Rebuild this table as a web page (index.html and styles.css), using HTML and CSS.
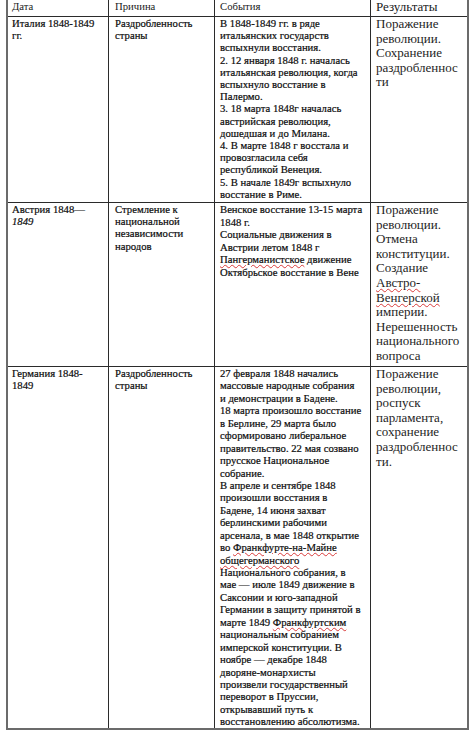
FILE: index.html
```html
<!DOCTYPE html>
<html lang="ru">
<head>
<meta charset="utf-8">
<title>Революции 1848–1849 гг.</title>
<link rel="stylesheet" href="styles.css">
</head>
<body>
<table class="grid">
  <thead>
    <tr class="head">
      <th class="cell c-date">Дата</th>
      <th class="cell c-cause">Причина</th>
      <th class="cell c-events">События</th>
      <th class="cell c-result">Результаты</th>
    </tr>
  </thead>
  <tbody>
    <tr class="row r1">
      <td class="cell c-date">Италия 1848-1849<br>гг.</td>
      <td class="cell c-cause">Раздробленность<br>страны</td>
      <td class="cell c-events">В 1848-1849 гг. в ряде<br>итальянских государств<br>вспыхнули восстания.<br>2. 12 января 1848 г. началась<br>итальянская революция, когда<br>вспыхнуло восстание в<br>Палермо.<br>3. 18 марта 1848г началась<br>австрийская революция,<br>дошедшая и до Милана.<br>4. В марте 1848 г восстала и<br>провозгласила себя<br>республикой Венеция.<br>5. В начале 1849г вспыхнуло<br>восстание в Риме.</td>
      <td class="cell c-result">Поражение<br>революции.<br>Сохранение<br>раздробленнос<br>ти</td>
    </tr>
    <tr class="row r2">
      <td class="cell c-date">Австрия 1848—<br><em>1849</em></td>
      <td class="cell c-cause">Стремление к<br>национальной<br>независимости<br>народов</td>
      <td class="cell c-events loose">Венское восстание 13-15 марта<br>1848 г.<br>Социальные движения в<br>Австрии летом 1848 г<br><span class="typo">Пангерманистское</span> движение<br>Октябрьское восстание в Вене</td>
      <td class="cell c-result">Поражение<br>революции.<br>Отмена<br>конституции.<br>Создание<br><span class="typo">Австро-</span><br><span class="typo">Венгерской</span><br>империи.<br>Нерешенность<br>национального<br>вопроса</td>
    </tr>
    <tr class="row r3">
      <td class="cell c-date">Германия 1848-<br>1849</td>
      <td class="cell c-cause">Раздробленность<br>страны</td>
      <td class="cell c-events long">27 февраля 1848 начались<br>массовые народные собрания<br>и демонстрации в Бадене.<br>18 марта произошло восстание<br>в Берлине, 29 марта было<br>сформировано либеральное<br>правительство. 22 мая созвано<br>прусское Национальное<br>собрание.<br>В апреле и сентябре 1848<br>произошли восстания в<br>Бадене, 14 июня захват<br>берлинскими рабочими<br>арсенала, в мае 1848 открытие<br>во <span class="typo">Франкфурте-на-Майне</span><br><span class="typo">общегерманского</span><br>Национального собрания, в<br>мае — июле 1849 движение в<br>Саксонии и юго-западной<br>Германии в защиту принятой в<br>марте 1849 <span class="typo">Франкфуртским</span><br>национальным собранием<br>имперской конституции. В<br>ноябре — декабре 1848<br>дворяне-монархисты<br>произвели государственный<br>переворот в Пруссии,<br>открывавший путь к<br>восстановлению абсолютизма.</td>
      <td class="cell c-result">Поражение<br>революции,<br>роспуск<br>парламента,<br>сохранение<br>раздробленнос<br>ти.</td>
    </tr>
  </tbody>
</table>
</body>
</html>
```

FILE: styles.css
```css
html, body {
  margin: 0;
  padding: 0;
  background: #ffffff;
}

body {
  font-family: "Liberation Serif", serif;
  color: #111111;
}

.grid {
  margin-left: 6px;
  width: 463px;
  table-layout: fixed;
  border-collapse: separate;
  border-spacing: 0;
  border-left: 2px solid #6b6b6b;
  border-right: 2px solid #6b6b6b;
  border-bottom: 2px solid #6b6b6b;
}

.cell {
  box-sizing: border-box;
  padding: 0 2px 0 5px;
  vertical-align: top;
  text-align: left;
  font-family: "Liberation Serif", serif;
  font-weight: normal;
  font-size: 10.7px;
  line-height: 12.2px;
  color: #0c0c0c;
  -webkit-text-stroke: 0.2px #0c0c0c;
  white-space: nowrap;
  overflow: hidden;
  border-right: 1px solid #2b2b2b;
  border-bottom: 1px solid #2b2b2b;
}

.row:last-child .cell {
  border-bottom: none;
}

.c-date {
  width: 101px;
  padding-left: 4px;
}

.c-cause {
  width: 106px;
  padding-left: 6px;
}

.c-events {
  width: 156px;
}

.c-result {
  width: 96px;
  border-right: none;
  font-size: 13px;
  line-height: 14.6px;
  color: #1e1e1e;
  -webkit-text-stroke: 0;
}

.c-events.loose {
  line-height: 12.6px;
}

.c-events.long {
  line-height: 12.43px;
}

.head {
  height: 17px;
}

.head .cell {
  -webkit-text-stroke: 0;
  color: #1a1a1a;
}

.r1 {
  height: 186px;
}

.r2 {
  height: 164px;
}

.r3 {
  height: 358px;
}

.typo {
  text-decoration: underline wavy #d93a3a;
  text-decoration-thickness: 1px;
  text-underline-offset: 1px;
}
```
